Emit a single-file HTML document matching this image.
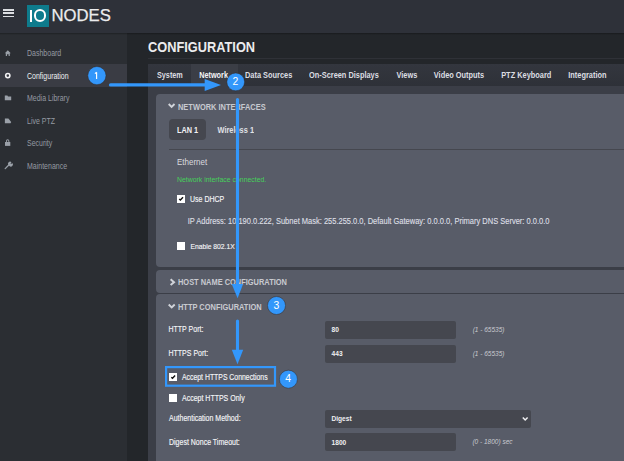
<!DOCTYPE html>
<html><head><meta charset="utf-8">
<style>
*{margin:0;padding:0;box-sizing:border-box}
html,body{width:624px;height:461px;overflow:hidden;background:#23262a;font-family:"Liberation Sans",sans-serif}
.a{position:absolute;white-space:nowrap}
#top{left:0;top:0;width:624px;height:33px;background:#2e3139}
#shd{left:0;top:33px;width:624px;height:2px;background:linear-gradient(rgba(0,0,0,.3),rgba(0,0,0,0))}
#side{left:0;top:33px;width:127px;height:428px;background:#2b2e33}
#act{left:0;top:64px;width:127px;height:23px;background:#3a3c44}
.si{left:27px;font-size:7px;color:#959aa2;line-height:8px;transform:translateY(-0.3px) scaleY(1.2);transform-origin:0 0}
#hdr{left:127px;top:33px;width:497px;height:30px;background:#23262a}
#sep{left:148px;top:58px;width:476px;height:1px;background:#2f3137}
#tabs{left:148px;top:63.5px;width:476px;height:22px;background:linear-gradient(#33363e,#2e3138)}
#acttab{left:191px;top:63.5px;width:47px;height:22px;background:#3b3e46}
#wrap{left:148px;top:85.5px;width:476px;height:376px;background:#3b3e47}
.tab{font-size:7.4px;font-weight:bold;color:#dcdee2;line-height:8px;top:70.6px;transform:translateY(0px) scaleY(1.16);transform-origin:0 0}
.pn{left:156px;width:480px;background:#585c68;border-radius:4px}
.sh{font-size:7.45px;font-weight:bold;color:#c8cad0;line-height:8px;left:178px;transform:scaleY(1.12);transform-origin:0 0}
.t{font-size:7px;color:#f4f5f7;line-height:8px;-webkit-text-stroke-width:0.12px;transform:translateY(-0.3px) scaleY(1.2);transform-origin:0 0}
.cb{width:8px;height:8px;background:#fff}
.inp{background:#45474f;border-radius:2px;height:18px}
.it{font-size:6.5px;font-style:italic;color:#c9cbd1;line-height:8px}
</style></head><body>
<div class="a" id="top"></div>
<div class="a" id="side"></div>
<div class="a" id="act"></div>
<div class="a" id="hdr"></div>
<div class="a" id="sep"></div>
<div class="a" id="tabs"></div>
<div class="a" id="acttab"></div>
<div class="a" id="wrap"></div>
<div class="a" id="shd"></div>

<!-- sidebar text -->
<div class="a si" style="top:49px">Dashboard</div>
<div class="a si" style="top:71.5px;color:#eef0f2">Configuration</div>
<div class="a si" style="top:94px">Media Library</div>
<div class="a si" style="top:116.5px">Live PTZ</div>
<div class="a si" style="top:139px">Security</div>
<div class="a si" style="top:161.5px">Maintenance</div>

<!-- title -->
<div class="a" style="left:148px;top:38.6px;font-size:12.8px;font-weight:bold;color:#ececee;line-height:16px;transform:scaleY(1.08);transform-origin:0 0">CONFIGURATION</div>

<!-- tabs -->
<div class="a tab" style="left:157px;font-size:7.25px">System</div>
<div class="a tab" style="left:199.2px;font-size:7.3px;color:#f4f4f6">Network</div>
<div class="a tab" style="left:245px">Data Sources</div>
<div class="a tab" style="left:309px">On-Screen Displays</div>
<div class="a tab" style="left:396.5px">Views</div>
<div class="a tab" style="left:433.8px">Video Outputs</div>
<div class="a tab" style="left:501.2px">PTZ Keyboard</div>
<div class="a tab" style="left:568.3px">Integration</div>

<!-- panels -->
<div class="a pn" style="top:93.5px;height:173.5px"></div>
<div class="a pn" style="top:270px;height:22.5px"></div>
<div class="a pn" style="top:294.3px;height:180px"></div>

<div class="a sh" style="top:102.5px">NETWORK INTERFACES</div>
<div class="a sh" style="top:277.6px">HOST NAME CONFIGURATION</div>
<div class="a sh" style="top:302.5px">HTTP CONFIGURATION</div>

<div class="a" style="left:168.7px;top:119.2px;width:37.5px;height:21px;background:#45474f;border-radius:4px"></div>
<div class="a" style="left:177px;top:126.3px;font-size:7.3px;font-weight:bold;color:#f2f2f4;line-height:8px;transform:scaleY(1.15);transform-origin:0 0">LAN 1</div>
<div class="a" style="left:217.5px;top:126.3px;font-size:7.4px;font-weight:bold;color:#e0e2e6;line-height:8px;transform:scaleY(1.15);transform-origin:0 0">Wireless 1</div>
<div class="a" style="left:168.7px;top:148.5px;width:460px;height:1px;background:#45474f"></div>
<div class="a" style="left:177px;top:156.5px;font-size:8px;color:#d8dadf;line-height:9px;transform:scaleY(1.1);transform-origin:0 0">Ethernet</div>
<div class="a" style="left:177px;top:175.2px;font-size:6.9px;color:#46d05b;line-height:8px;transform:scaleY(1.12);transform-origin:0 0">Network interface connected.</div>
<div class="a cb" style="left:176.6px;top:195px;width:8.3px;height:8.2px"></div>
<div class="a t" style="left:190px;top:195px">Use DHCP</div>
<div class="a t" style="left:187.7px;top:217px;font-size:7.5px;color:#dcdee3">IP Address: 10.190.0.222, Subnet Mask: 255.255.0.0, Default Gateway: 0.0.0.0, Primary DNS Server: 0.0.0.0</div>
<div class="a cb" style="left:176.5px;top:241.5px"></div>
<div class="a t" style="left:190.4px;top:242px;font-size:6.75px">Enable 802.1X</div>

<div class="a t" style="left:168.5px;top:325px">HTTP Port:</div>
<div class="a inp" style="left:325.2px;top:321px;width:131px"></div>
<div class="a" style="left:331.6px;top:325.2px;font-size:6.6px;font-weight:bold;color:#f0f0f2;line-height:8px;transform:scaleY(1.15);transform-origin:0 0">80</div>
<div class="a it" style="left:472.7px;top:325.5px">(1 - 65535)</div>

<div class="a t" style="left:168.5px;top:349px">HTTPS Port:</div>
<div class="a inp" style="left:325.2px;top:345px;width:131px"></div>
<div class="a" style="left:331.6px;top:349.2px;font-size:6.6px;font-weight:bold;color:#f0f0f2;line-height:8px;transform:scaleY(1.15);transform-origin:0 0">443</div>
<div class="a it" style="left:472.7px;top:349.5px">(1 - 65535)</div>

<div class="a cb" style="left:168.8px;top:373.2px;width:8.2px;height:8.3px"></div>
<div class="a t" style="left:182px;top:373px;font-size:6.88px">Accept HTTPS Connections</div>
<div class="a cb" style="left:169px;top:393.7px"></div>
<div class="a t" style="left:182px;top:394px">Accept HTTPS Only</div>

<div class="a t" style="left:169px;top:414px">Authentication Method:</div>
<div class="a inp" style="left:325.2px;top:410px;width:205.4px"></div>
<div class="a" style="left:331.5px;top:414.2px;font-size:6.6px;font-weight:bold;color:#f0f0f2;line-height:8px;transform:scaleY(1.15);transform-origin:0 0">Digest</div>
<div class="a t" style="left:169px;top:438px">Digest Nonce Timeout:</div>
<div class="a inp" style="left:325.2px;top:433.3px;width:131px"></div>
<div class="a" style="left:331.6px;top:437.7px;font-size:6.6px;font-weight:bold;color:#f0f0f2;line-height:8px;transform:scaleY(1.15);transform-origin:0 0">1800</div>
<div class="a it" style="left:472.4px;top:438px">(0 - 1800) sec</div>

<!-- logo -->
<div class="a" style="left:27px;top:5px;width:21.8px;height:21.9px;background:#0e7b8c"></div>
<div class="a" style="left:51.5px;top:6px;font-size:16.7px;color:#ececee;line-height:19px;-webkit-text-stroke:0.25px #ececee">NODES</div>


<!-- hamburger -->
<div class="a" style="left:2.8px;top:9.1px;width:11.4px;height:1.7px;background:#dcdee2"></div>
<div class="a" style="left:2.8px;top:12.3px;width:11.4px;height:1.7px;background:#dcdee2"></div>
<div class="a" style="left:2.8px;top:15.5px;width:11.4px;height:1.7px;background:#dcdee2"></div>
<!-- logo IO -->
<div class="a" style="left:29.6px;top:9.8px;width:2.2px;height:12.2px;background:#fff"></div>
<div class="a" style="left:33.7px;top:9.3px;width:12.8px;height:12.8px;border:2.1px solid #fff;border-radius:50%"></div>

<!-- sidebar icons -->
<svg class="a" style="left:0;top:40px" width="20" height="140" viewBox="0 40 20 140">
 <g fill="#9aa0a8">
  <path d="M7.8 50.2 L4.8 53.2 L5.8 53.2 L5.8 56.1 L7 56.1 L7 54.3 L8.6 54.3 L8.6 56.1 L9.8 56.1 L9.8 53.2 L10.8 53.2 Z"/>
  <path d="M4.8 95.6 h2.6 l0.6 0.8 h3.2 v3.8 h-6.4 z"/>
  <path d="M4.9 118.4 H8.4 L11.2 121.9 L10.6 123.2 H4.9 Z"/>
  <path d="M5 142 h5.3 v3.9 h-5.3 z"/>
  <path d="M6 142 v-1.2 a1.65 1.65 0 0 1 3.3 0 v1.2 h-0.9 v-1.1 a0.75 0.75 0 0 0 -1.5 0 v1.1z"/>
 </g>
 <circle cx="7.8" cy="75.6" r="2.1" fill="none" stroke="#f2f2f4" stroke-width="1.6"/>
 <path d="M5.2 168.6 L9.3 164.5" stroke="#9aa0a8" stroke-width="1.3" stroke-linecap="round"/>
 <path d="M8.6 165.2 a2 2 0 0 1 2.9 -2.9 l-1 1.2 l0.6 0.6 l1.2 -1 a2 2 0 0 1 -2.9 2.9z" fill="#9aa0a8"/>
</svg>

<!-- chevrons -->
<svg class="a" style="left:160px;top:95px" width="20" height="200" viewBox="160 95 20 200">
 <path d="M168.7 104 L171.6 106.9 L174.5 104" fill="none" stroke="#d0d3d9" stroke-width="1.9"/>
 <path d="M170.6 279.3 L174 282.2 L170.6 285.1" fill="none" stroke="#d0d3d9" stroke-width="2"/>
</svg>
<svg class="a" style="left:160px;top:300px" width="20" height="12" viewBox="160 300 20 12">
 <path d="M168.7 304.5 L171.7 307.4 L174.7 304.5" fill="none" stroke="#d0d3d9" stroke-width="1.9"/>
</svg>
<!-- checks -->
<svg class="a" style="left:160px;top:190px" width="30" height="200" viewBox="160 190 30 200">
 <path d="M179.2 198.9 L180.4 200 L183 197.2" fill="none" stroke="#111" stroke-width="1.4"/>
 <path d="M171.3 377.2 L172.5 378.3 L175.1 375.5" fill="none" stroke="#111" stroke-width="1.4"/>
</svg>
<!-- select chevron -->
<svg class="a" style="left:518px;top:412px" width="14" height="12" viewBox="518 412 14 12">
 <path d="M522.8 417.4 L525.2 419.9 L527.6 417.4" fill="none" stroke="#f0f0f2" stroke-width="1.5"/>
</svg>

<!-- annotations -->
<svg class="a" style="left:0;top:0" width="624" height="461" viewBox="0 0 624 461">
 <g fill="#3397fb">
  <path d="M110.6 84.9 L206 84.9" stroke="#3397fb" stroke-width="3.4" stroke-linecap="round"/>
  <path d="M204.7 79 L221 85 L204.7 91 Z"/>
  <path d="M237.5 99.5 L237.5 285" stroke="#3397fb" stroke-width="3.1" stroke-linecap="round"/>
  <path d="M231.7 283.9 L243.1 283.9 L237.6 298.3 Z"/>
  <path d="M237.5 321 L237.5 351" stroke="#3397fb" stroke-width="3.1" stroke-linecap="round"/>
  <path d="M231.8 349.8 L243.2 349.8 L237.5 364.3 Z"/>
 </g>
 <rect x="166.1" y="367.1" width="108.9" height="18.6" fill="none" stroke="#3397fb" stroke-width="2.2"/>
 <g fill="#3397fb" stroke="rgba(45,35,30,0.55)" stroke-width="0.8">
  <circle cx="96.9" cy="75.6" r="9.1"/>
  <circle cx="235.7" cy="81.9" r="8.9"/>
  <circle cx="276.5" cy="305.5" r="9"/>
  <circle cx="288.4" cy="379.2" r="9"/>
 </g>
 <g fill="#fff" font-family="Liberation Sans" font-size="10.4" text-anchor="middle">
  
  <text x="235.3" y="85.3">2</text>
  <text x="276.3" y="309.1">3</text>
  <text x="288.1" y="382.4">4</text>
 </g>
 <path d="M96.6 72.2 V78.9 M96.6 72.2 L94.9 73.6" stroke="#fff" stroke-width="1.15" fill="none"/>
</svg>
</body></html>
